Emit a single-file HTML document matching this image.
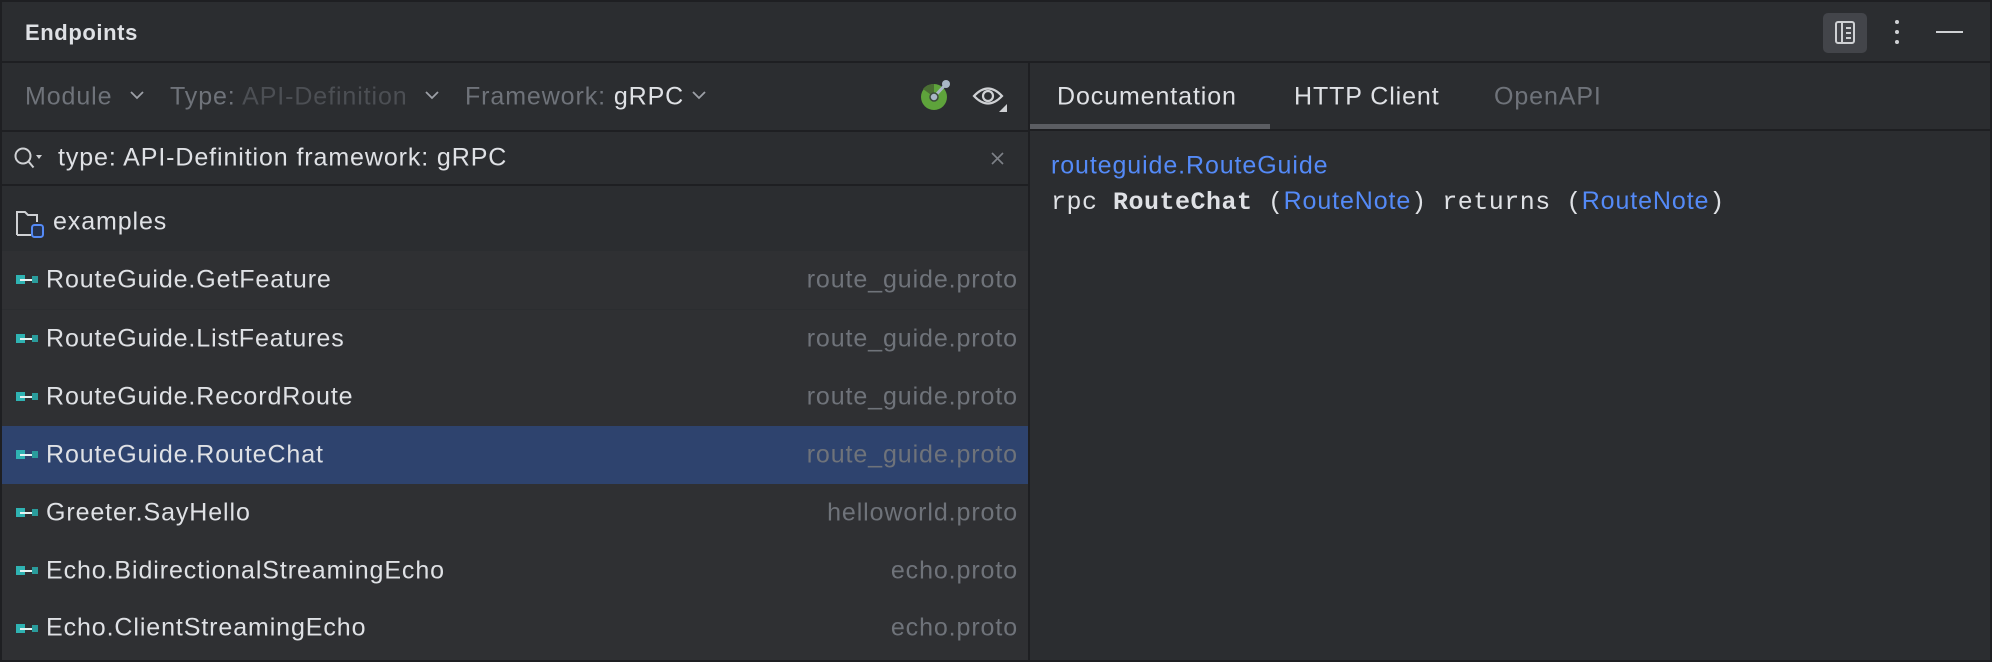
<!DOCTYPE html><html><head><style>
*{margin:0;padding:0;box-sizing:border-box}
body{width:1992px;height:662px;background:#2b2d30;font-family:"Liberation Sans",sans-serif;color:#dfe1e5;position:relative;overflow:hidden}
.a{position:absolute;white-space:nowrap}
.t{font-size:25px;letter-spacing:0.9px;transform:translateY(-50%)}
.g{color:#6f737a}
.row{position:absolute;left:2px;width:1026px;height:58px;background:#2f3033}
.ic{position:absolute;left:14px;width:22px;height:8px}
.ic:before{content:"";position:absolute;left:0;top:-1px;width:9px;height:9px;background:#2fb3b3}
.ic:after{content:"";position:absolute;right:0;top:0;width:6px;height:7px;background:#2a9c9c}
.ic i{position:absolute;left:4px;top:3px;width:14px;height:2px;background:#e8f4f4}
.fn{position:absolute;right:10px;color:#6f737a;font-size:25px;letter-spacing:0.9px;top:50%;transform:translateY(-50%)}
.nm{position:absolute;left:44px;font-size:25px;letter-spacing:0.9px;top:50%;transform:translateY(-50%)}
</style></head><body>
<div class="a" style="left:0;top:0;width:1992px;height:662px;border:2px solid #1e1f22"></div>
<div class="a t" style="left:25px;top:33px;font-weight:bold;font-size:22px;letter-spacing:0.6px;color:#dfe1e5">Endpoints</div>
<div class="a" style="left:1823px;top:13px;width:44px;height:40px;background:#43454a;border-radius:5px"></div>
<div class="a" style="left:1835px;top:21px;width:20px;height:23px;border:2px solid #cfd1d4;border-radius:3px"></div>
<div class="a" style="left:1841px;top:22px;width:2px;height:21px;background:#cfd1d4"></div>
<div class="a" style="left:1846px;top:27px;width:5px;height:2px;background:#cfd1d4;box-shadow:0 5px 0 #cfd1d4,0 10px 0 #cfd1d4"></div>
<div class="a" style="left:1895px;top:20px;width:4px;height:4px;border-radius:2px;background:#cfd1d4;box-shadow:0 10px 0 #cfd1d4,0 20px 0 #cfd1d4"></div>
<div class="a" style="left:1936px;top:31px;width:27px;height:2px;background:#cfd1d4"></div>
<div class="a" style="left:0;top:61px;width:1992px;height:2px;background:#1e1f22"></div>
<div class="a" style="left:1028px;top:63px;width:2px;height:599px;background:#1e1f22"></div>
<!-- filter bar -->
<div class="a t g" style="left:25px;top:97px">Module</div>
<div class="a t g" style="left:170px;top:97px">Type: <span style="color:#4c4f54">API-Definition</span></div>
<div class="a t" style="left:465px;top:97px"><span class="g">Framework: </span>gRPC</div>
<svg class="a" style="left:0;top:85px" width="720" height="20"><g fill="none" stroke="#9da0a6" stroke-width="1.8"><path d="M131 7l6 6 6-6"/><path d="M426 7l6 6 6-6"/><path d="M693 7l6 6 6-6"/></g></svg>
<svg class="a" style="left:918px;top:78px" width="90" height="36"><circle cx="16" cy="19" r="13" fill="#5ea33b"/><path d="M16 19L5 11A13 13 0 0 1 16 6z" fill="#4a6e33"/><line x1="16" y1="19" x2="28" y2="6" stroke="#a9b7c6" stroke-width="3"/><circle cx="28" cy="6" r="4" fill="#a9b7c6"/><circle cx="16" cy="19" r="4" fill="#a9b7c6" stroke="#3a4a3a" stroke-width="1.5"/><path d="M56 18q14-15 28 0q-14 15-28 0z" fill="none" stroke="#cfd1d4" stroke-width="2.2"/><circle cx="70" cy="18" r="5" fill="none" stroke="#cfd1d4" stroke-width="2.2"/><path d="M89 26v8h-8z" fill="#cfd1d4"/></svg>
<div class="a" style="left:1030px;top:129px;width:962px;height:2px;background:#1e1f22"></div>
<div class="a" style="left:1030px;top:124px;width:240px;height:5px;background:#5b5d62"></div>
<div class="a t" style="left:1057px;top:97px">Documentation</div>
<div class="a t" style="left:1294px;top:97px">HTTP Client</div>
<div class="a t g" style="left:1494px;top:97px">OpenAPI</div>
<div class="a" style="left:0;top:130px;width:1028px;height:2px;background:#1e1f22"></div>
<!-- search -->
<svg class="a" style="left:12px;top:145px" width="40" height="28"><circle cx="11" cy="11" r="7.5" fill="none" stroke="#cfd1d4" stroke-width="2"/><path d="M16.5 16.5l5 6" stroke="#cfd1d4" stroke-width="2"/><path d="M24 10h6l-3 4z" fill="#cfd1d4"/></svg>
<div class="a t" style="left:58px;top:158px">type: API-Definition framework: gRPC</div>
<svg class="a" style="left:990px;top:151px" width="16" height="16"><path d="M2 2l11 11M13 2L2 13" stroke="#7e8187" stroke-width="1.6"/></svg>
<div class="a" style="left:0;top:184px;width:1028px;height:2px;background:#1e1f22"></div>
<!-- examples -->
<svg class="a" style="left:15px;top:208px" width="36" height="32"><path d="M2 27V4h8l3 3h9v7" fill="none" stroke="#cfd1d4" stroke-width="2"/><path d="M2 27h14" stroke="#cfd1d4" stroke-width="2"/><rect x="17" y="17" width="11" height="12" rx="2.5" fill="#25324d" stroke="#548af7" stroke-width="2"/></svg>
<div class="a t" style="left:53px;top:222px">examples</div>
<div class="row" style="top:251px"><div class="ic" style="top:25px"><i></i></div><div class="nm">RouteGuide.GetFeature</div><div class="fn">route_guide.proto</div></div>
<div class="row" style="top:310px"><div class="ic" style="top:25px"><i></i></div><div class="nm">RouteGuide.ListFeatures</div><div class="fn">route_guide.proto</div></div>
<div class="row" style="top:368px"><div class="ic" style="top:25px"><i></i></div><div class="nm">RouteGuide.RecordRoute</div><div class="fn">route_guide.proto</div></div>
<div class="row" style="top:426px;background:#2e436e"><div class="ic" style="top:25px"><i></i></div><div class="nm">RouteGuide.RouteChat</div><div class="fn">route_guide.proto</div></div>
<div class="row" style="top:484px"><div class="ic" style="top:25px"><i></i></div><div class="nm">Greeter.SayHello</div><div class="fn">helloworld.proto</div></div>
<div class="row" style="top:542px"><div class="ic" style="top:25px"><i></i></div><div class="nm">Echo.BidirectionalStreamingEcho</div><div class="fn">echo.proto</div></div>
<div class="row" style="top:600px;height:60px"><div class="ic" style="top:25px"><i></i></div><div class="nm" style="top:28px">Echo.ClientStreamingEcho</div><div class="fn" style="top:28px">echo.proto</div></div>
<!-- doc -->
<div class="a t" style="left:1051px;top:166px;color:#548af7">routeguide.RouteGuide</div>
<div class="a t" style="left:1051px;top:202px;font-family:'Liberation Mono',monospace;font-size:25px;letter-spacing:0.5px">rpc <b>RouteChat</b> (<span style="color:#548af7;font-family:'Liberation Sans',sans-serif;font-size:25px;letter-spacing:0.9px">RouteNote</span>) returns (<span style="color:#548af7;font-family:'Liberation Sans',sans-serif;font-size:25px;letter-spacing:0.9px">RouteNote</span>)</div>
</body></html>
